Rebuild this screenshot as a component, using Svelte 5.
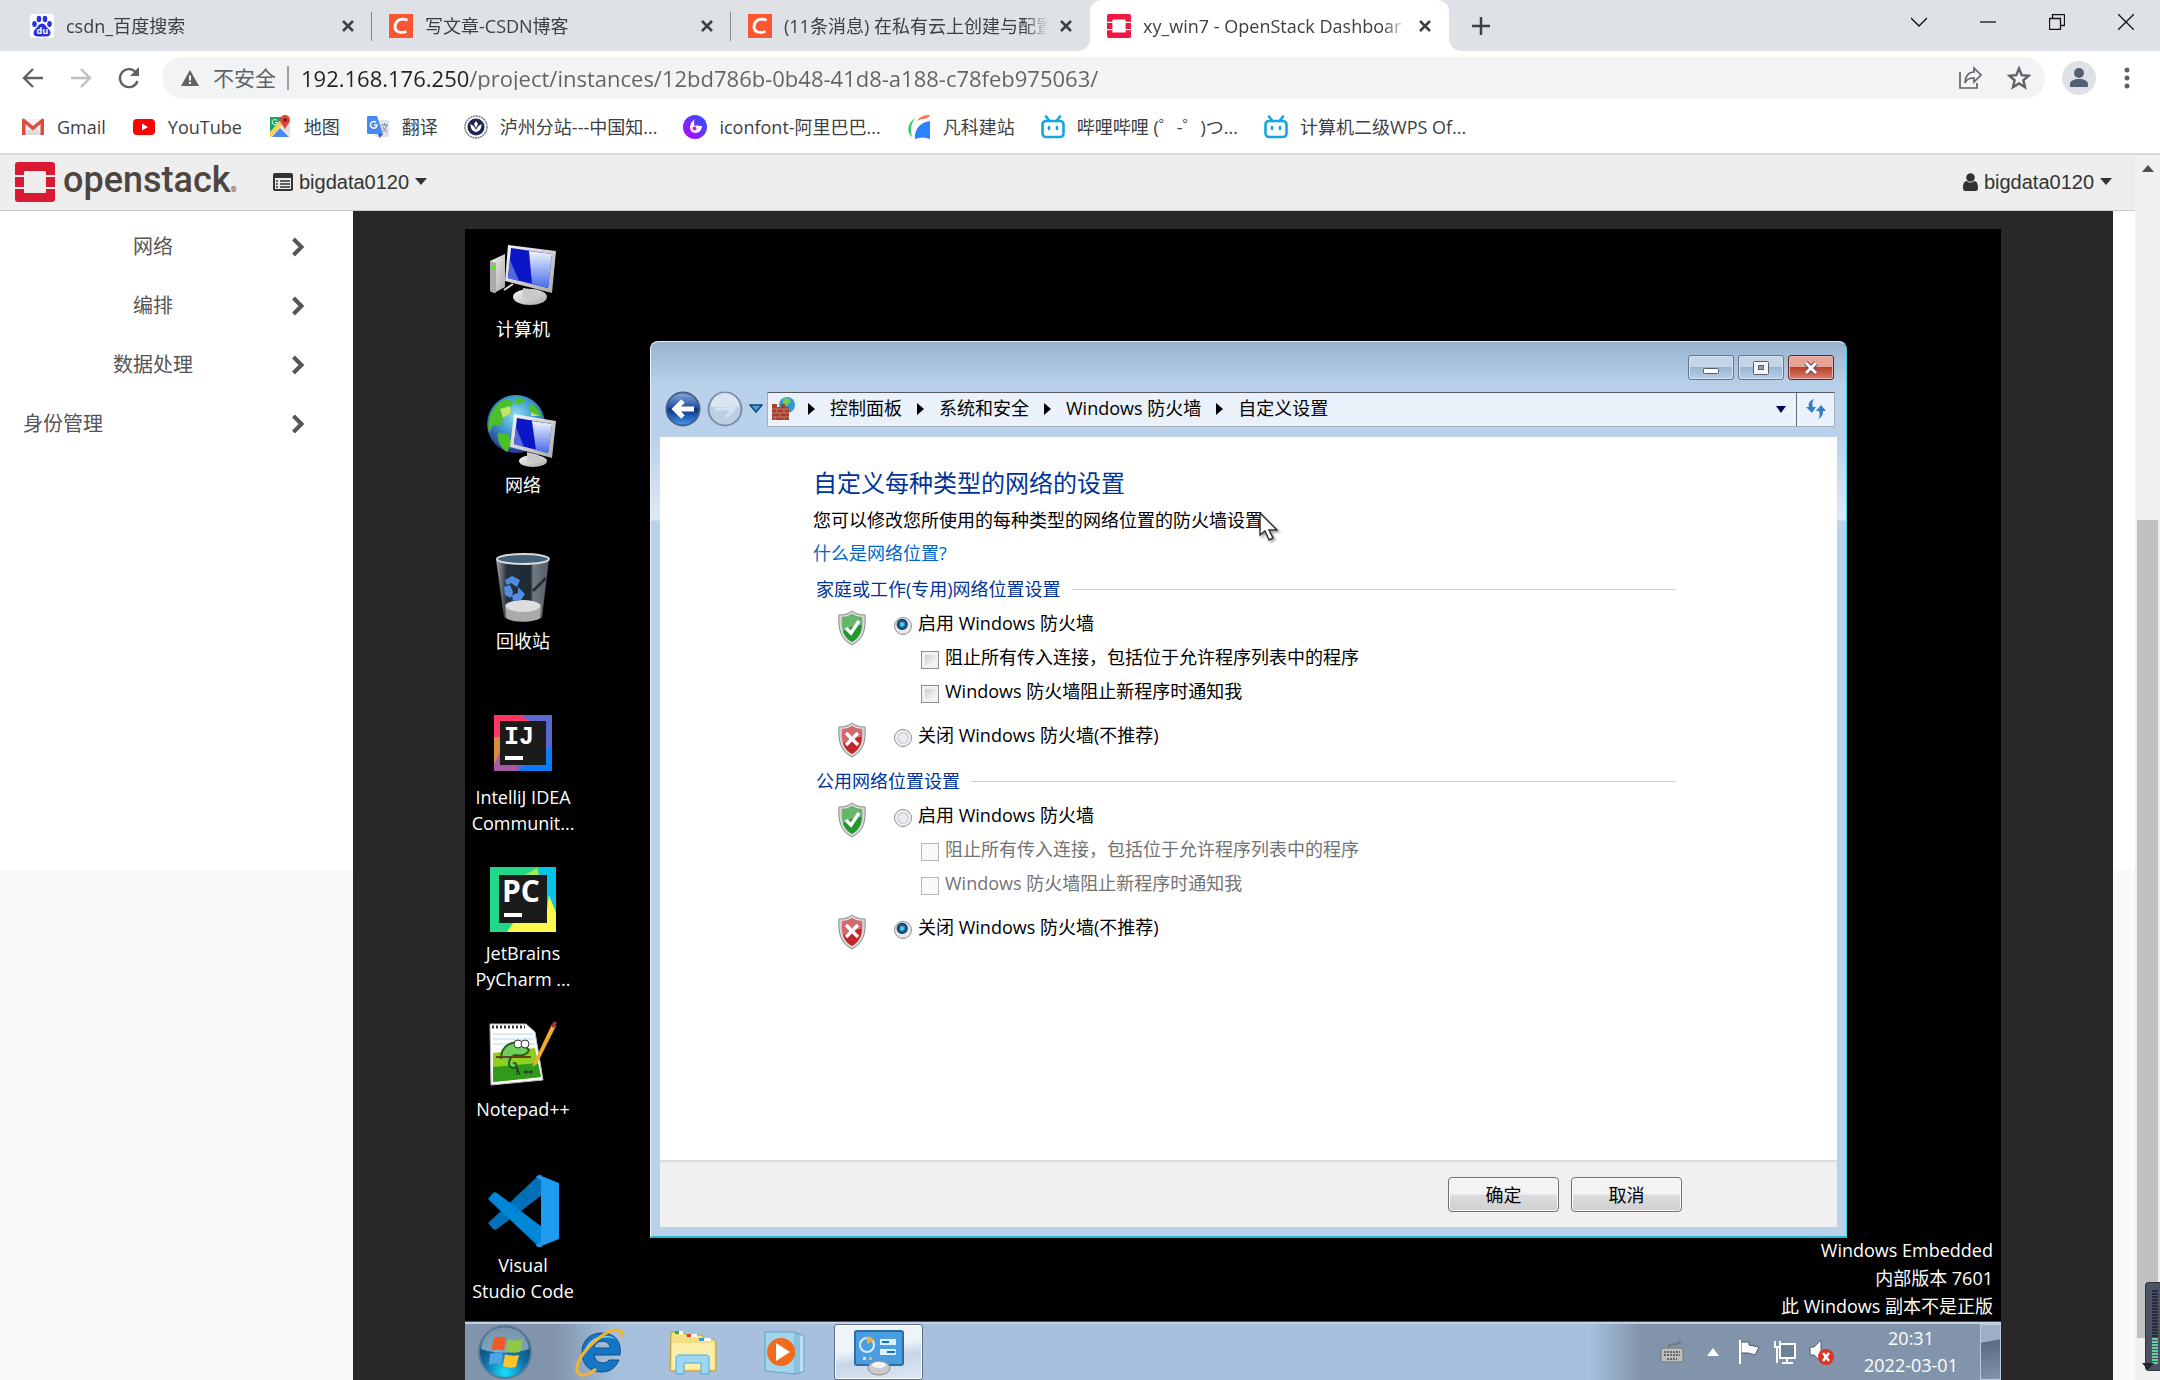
<script>
	const tabs = [
		{ icon: 'baidu', title: 'csdn_百度搜索' },
		{ icon: 'csdn', title: '写文章-CSDN博客' },
		{ icon: 'csdn', title: '(11条消息) 在私有云上创建与配置' },
		{ icon: 'openstack', title: 'xy_win7 - OpenStack Dashboar', active: true }
	];
	const bookmarks = [
		{ icon: 'gmail', title: 'Gmail' },
		{ icon: 'youtube', title: 'YouTube' },
		{ icon: 'maps', title: '地图' },
		{ icon: 'translate', title: '翻译' },
		{ icon: 'cnki', title: '泸州分站---中国知...' },
		{ icon: 'iconfont', title: 'iconfont-阿里巴巴...' },
		{ icon: 'fkw', title: '凡科建站' },
		{ icon: 'bilibili', title: '哔哩哔哩 (゜-゜)つ...' },
		{ icon: 'bilibili', title: '计算机二级WPS Of...' }
	];
	const panels = [
		{ title: '网络', nested: true },
		{ title: '编排', nested: true },
		{ title: '数据处理', nested: true },
		{ title: '身份管理' }
	];
	const shortcuts = [
		{ icon: 'computer', title: '计算机' },
		{ icon: 'network', title: '网络' },
		{ icon: 'bin', title: '回收站' },
		{ icon: 'idea', title: 'IntelliJ IDEA\nCommunit...' },
		{ icon: 'pycharm', title: 'JetBrains\nPyCharm ...' },
		{ icon: 'notepad', title: 'Notepad++' },
		{ icon: 'vscode', title: 'Visual\nStudio Code' }
	];
	const crumbs = ['控制面板', '系统和安全', 'Windows 防火墙', '自定义设置'];
	const taskbar = ['ie', 'explorer', 'player', 'control'];

	let url = $state('192.168.176.250/project/instances/12bd786b-0b48-41d8-a188-c78feb975063/');
	let locations = $state([
		{ id: 'home', title: '家庭或工作(专用)网络位置设置', firewall: 'on', block: false, notify: false },
		{ id: 'public', title: '公用网络位置设置', firewall: 'off', block: false, notify: false }
	]);
	const meter = Array.from({ length: 25 }, (_, i) => i);
</script>

{#snippet icon(name)}
	{#if name === 'baidu'}
		<svg width="24" height="24" viewBox="0 0 24 24">
			<rect width="24" height="24" rx="3" fill="#fff" />
			<g fill="#2932e1">
				<ellipse cx="4.5" cy="10" rx="2.3" ry="3" />
				<ellipse cx="9" cy="5" rx="2.3" ry="3.2" />
				<ellipse cx="15" cy="5" rx="2.3" ry="3.2" />
				<ellipse cx="19.5" cy="10" rx="2.3" ry="3" />
				<path d="M12 9.500c3 0 4 3 6 5s2.500 3 2.500 4.500c0 2-1.500 3.500-4 3.500h-9c-2.500 0-4-1.500-4-3.500 0-1.500.5-2.500 2.500-4.500s3-5 6-5z" />
			</g>
			<text x="6.500" y="20" font-size="9" font-weight="700" fill="#fff">du</text>
		</svg>
	{:else if name === 'csdn'}
		<svg width="24" height="24" viewBox="0 0 24 24">
			<rect width="24" height="24" fill="#fc5531" />
			<path d="M18.500 6.200C12 3.500 6.500 6.500 6 12.300c-.4 5.500 5 7.500 11.500 5.200" fill="none" stroke="#fff" stroke-width="2.800" />
		</svg>
	{:else if name === 'openstack'}
		<svg width="24" height="24" viewBox="0 0 40 40">
			<path
				fill="#f01742"
				d="M0 3a3 3 0 0 1 3-3h34a3 3 0 0 1 3 3v10h-9v-3a1 1 0 0 0-1-1H10a1 1 0 0 0-1 1v3H0zM0 15h9v10H0zM31 15h9v10h-9zM0 27h9v3a1 1 0 0 0 1 1h20a1 1 0 0 0 1-1v-3h9v10a3 3 0 0 1-3 3H3a3 3 0 0 1-3-3z"
			/>
		</svg>
	{:else if name === 'gmail'}
		<svg width="24" height="24" viewBox="0 0 24 24">
			<path d="M2 4h20v16H2z" fill="#f1f1f1" />
			<path d="M2 20 12 11l10 9z" fill="#dcdcdc" />
			<path d="M1 20V5c0-1.500 1.500-2 2.500-1L12 11l8.500-7c1-1 2.500-.5 2.500 1v15h-3.500V9L12 15.500 4.500 9v11z" fill="#e04a3f" />
		</svg>
	{:else if name === 'youtube'}
		<svg width="24" height="24" viewBox="0 0 24 24">
			<rect x="1" y="4" width="22" height="16" rx="4" fill="#f00" />
			<path d="m10 8.500 6 3.500-6 3.500z" fill="#fff" />
		</svg>
	{:else if name === 'maps'}
		<svg width="24" height="24" viewBox="0 0 24 24">
			<path d="M2 2h20v20H2z" fill="#e8e8e8" />
			<path d="M2 2h13L2 18z" fill="#1fa463" />
			<path d="M2 17 15 3h5L3 22H2z" fill="#ffd04b" />
			<path d="m4 22 8-9 9 9z" fill="#4a89f3" />
			<path d="m14 11 8 9V8z" fill="#ddd" />
			<path d="M17 0c3 0 5 2.200 5 5 0 4-4 5-5 10-1-5-5-6-5-10 0-2.800 2-5 5-5z" fill="#e0483c" />
			<circle cx="17" cy="5" r="2" fill="#7b2019" />
			<path d="M9 5.500a2.700 2.700 0 1 0 .6 2H7" fill="none" stroke="#fff" />
		</svg>
	{:else if name === 'translate'}
		<svg width="24" height="24" viewBox="0 0 24 24">
			<rect x="9" y="5" width="14" height="17" rx="1" fill="#dfe1e5" />
			<path d="M15 10h7M18.500 8v2m-2 7c2-1.500 3.500-4 4-7m-3.500 2c.5 2 2 4 4 5" fill="none" stroke="#74869b" />
			<path d="M1 2.500C1 1.500 1.500 1 2.500 1H11l6 18H2.500C1.500 19 1 18.500 1 17.500z" fill="#4889f4" />
			<path d="m12 19 1.500 4 3.500-4z" fill="#2a5dc0" />
			<path d="M10 7.500A3.300 3.300 0 1 0 11 10H8" fill="none" stroke="#fff" stroke-width="1.500" />
		</svg>
	{:else if name === 'cnki'}
		<svg width="24" height="24" viewBox="0 0 24 24">
			<circle cx="12" cy="12" r="11" fill="#fff" stroke="#8a8c94" stroke-width="1.800" stroke-dasharray="2 .7" />
			<circle cx="12" cy="12" r="8.500" fill="#1e2750" />
			<path d="M12 17c-5-1-5.500-5-5.500-8 2 1 4.500 3 5.500 6 1-3 3.500-5 5.500-6 0 3-.5 7-5.500 8zm0-4-2-4 2-3 2 3z" fill="#fff" />
		</svg>
	{:else if name === 'iconfont'}
		<svg width="24" height="24" viewBox="0 0 24 24">
			<defs>
				<linearGradient id="iconfont" x1="0" y1="1" x2="1" y2="0">
					<stop offset="0" stop-color="#c400ff" />
					<stop offset="1" stop-color="#1a5cff" />
				</linearGradient>
			</defs>
			<circle cx="12" cy="12" r="12" fill="url(#iconfont)" />
			<path d="M12 4c-2 3 0 5-1 7 2 0 3-1 3-1 1 1 3 1 5 1-.5 9-12 9-12 1 0-3 2-6 5-8z" fill="#fff" />
			<circle cx="11.500" cy="13.500" r="2" fill="#e01ba8" />
		</svg>
	{:else if name === 'fkw'}
		<svg width="24" height="24" viewBox="0 0 24 24">
			<path d="M8 24C7 15 13 7 23 6v18c-5-2-10-2-15 0z" fill="#2a82ff" />
			<path d="M5 22C-2 16 2 7 8 3 4 9 3 15 5 22z" fill="#37c871" />
			<path d="M10 6c3-5 8-6 13-6-1 3-5 4-8 4-2 0-3 1-5 2z" fill="#ff7043" />
		</svg>
	{:else if name === 'bilibili'}
		<svg width="24" height="24" viewBox="0 0 24 24" fill="none" stroke="#13a6e0" stroke-width="2.600" stroke-linecap="round">
			<rect x="1.500" y="6" width="21" height="16" rx="3.500" />
			<path d="M5 1.500 8.500 6M19 1.500 15.500 6M8 12v2M16 12v2" />
		</svg>
	{:else if name === 'computer' || name === 'network'}
		<svg width="72" height="72" viewBox="0 0 72 72">
			<defs>
				<linearGradient id="metal" x1="0" y1="0" x2="1" y2="1">
					<stop offset="0" stop-color="#f7f7f7" />
					<stop offset="1" stop-color="#a9a9a9" />
				</linearGradient>
				<linearGradient id="glare" x1="0" y1="0" x2="0" y2="1">
					<stop offset="0" stop-color="#f1f5ff" />
					<stop offset="1" stop-color="#4569e8" />
				</linearGradient>
				<radialGradient id="globe" cx=".5" cy=".35" r=".65">
					<stop offset="0" stop-color="#8ce1f2" />
					<stop offset=".5" stop-color="#3e97cf" />
					<stop offset="1" stop-color="#263a91" />
				</radialGradient>
			</defs>
			{#if name === 'computer'}
				<path d="m3 22 15-7v33L7 54l-4-2z" fill="url(#metal)" />
				<path d="m3 22 6 2v30l-6-2z" fill="#aaa" />
				<path d="M4 27h4v3H4z" fill="#5ce312" />
				<path d="m17 51 9-6" stroke="#d7d7d7" stroke-width="2" />
				<ellipse cx="43" cy="58" rx="17" ry="8" fill="url(#metal)" />
				<path d="m36 49 14 2v8H35z" fill="#c8c8c8" />
				<path d="m21 6 48 6-4 42-47-12z" fill="url(#metal)" />
				<path d="m24 9 41 6-4 34-40-10z" fill="#0b16c6" />
				<path d="m42 12 23 3-4 34-16-4z" fill="url(#glare)" />
				<path d="m21 39 2-18 9 21z" fill="#5269db" />
			{:else}
				<circle cx="29" cy="29" r="29" fill="url(#globe)" />
				<path d="M2 38C-1 22 7 8 20 4l7 4-6 6 4 4-8 4-4 9-7-1zM31 2l8 4-8 4-4-4zM44 8c6 4 9 9 11 14l-7-2-6-5zM11 38l10 1 4 9-5 9C14 53 10 47 11 38z" fill="#4cbf2a" />
				<path d="m13 14 10-3 1 7-8 5zM44 17l8 4h-8z" fill="#c5e26a" />
				<ellipse cx="46" cy="66" rx="14" ry="6" fill="url(#metal)" />
				<path d="m40 57 12 3v6H40z" fill="#c8c8c8" />
				<path d="m27 19 42 7-4 37-42-11z" fill="url(#metal)" />
				<path d="m30 23 35 6-4 29-34-9z" fill="#0b16c6" />
				<path d="m45 26 20 3-4 29-12-3z" fill="url(#glare)" />
				<path d="m27 49 2-17 8 20z" fill="#5269db" />
			{/if}
		</svg>
	{:else if name === 'bin'}
		<svg width="72" height="72" viewBox="0 0 72 72">
			<defs>
				<linearGradient id="glass" x1="0" y1="0" x2="1" y2="0">
					<stop offset="0" stop-color="#a4abb0" />
					<stop offset=".2" stop-color="#28323c" />
					<stop offset=".65" stop-color="#1d2935" />
					<stop offset=".7" stop-color="#707a82" />
					<stop offset="1" stop-color="#555c62" />
				</linearGradient>
			</defs>
			<path d="m9 8 8 58c3 5 35 5 38 0l7-58z" fill="url(#glass)" />
			<ellipse cx="36" cy="8" rx="26" ry="5" fill="#456078" stroke="#d7d9db" stroke-width="2" />
			<path d="M18 54c4-6 33-6 36 0l-1 13c-6 5-28 5-34 0z" fill="#aaa" />
			<ellipse cx="36" cy="55" rx="17" ry="6" fill="#dedede" />
			<path d="m46 40 13-13" stroke="#25303b" stroke-width="3" />
			<path d="m18 29 7-4 8 4-3 7-6-4-4 2zM17 36l6-2 3 7-2 6-6-3zM31 36l7 7-4 6-8 1-1-6 6-2z" fill="#4e8de2" />
		</svg>
	{:else if name === 'idea'}
		<svg width="72" height="72" viewBox="0 0 72 72">
			<path d="M7 8h58v56H7z" fill="#5b68cf" />
			<path d="M7 8h26l13 8-20 20H7z" fill="#fc3766" />
			<path d="M7 30h9v22l-9 6z" fill="#d58b42" />
			<path d="m7 58 9-20 18 26H7z" fill="#a55aa5" />
			<path d="M65 38v26H30l16-10z" fill="#087cfa" />
			<path d="M13 14h46v44H13z" fill="#1b1b1b" />
			<text x="17" y="37" font-size="25" font-family="Liberation Mono" font-weight="700" fill="#fff">IJ</text>
			<path d="M18 49h18v4H18z" fill="#fff" />
		</svg>
	{:else if name === 'pycharm'}
		<svg width="72" height="72" viewBox="0 0 72 72">
			<path d="M3 4h66v65H3z" fill="#21d789" />
			<path d="M53 4h16v40L51 24z" fill="#07c3e8" />
			<path d="m38 12 12-7 9 30-16 6z" fill="#a8e85b" />
			<path d="m20 69 6-9 34-13 2-15 7 18v19z" fill="#fcf84a" />
			<path d="M12 12h48v48H12z" fill="#1b1b1b" />
			<text x="15" y="39" font-size="30" font-weight="700" fill="#fff">PC</text>
			<path d="M17 50h18v4H17z" fill="#fff" />
		</svg>
	{:else if name === 'notepad'}
		<svg width="72" height="72" viewBox="0 0 72 72">
			<path d="M3 5h36l9 8 8 48-52 5z" fill="#fff" stroke="#bbb" />
			<path d="m6 34 42-5 6 29-48 5z" fill="#8fd01c" />
			<path d="m6 48 45-4 3 14-48 5z" fill="#2e9b1d" />
			<path d="M6 15h40M6 20h41M6 25h42" stroke="#b3d6ef" />
			<path d="M5 8h33" stroke="#333" stroke-width="3" stroke-dasharray="2 2" />
			<path d="M14 40c0-15 13-19 22-15l6 6c-2 6-8 6-14 5-6 2-9 12-2 13 5 0 4-6 0-5" fill="#6dd05a" stroke="#275d1c" stroke-width="2" />
			<circle cx="31" cy="25" r="4" fill="#fff" stroke="#333" />
			<circle cx="38" cy="25" r="4" fill="#fff" stroke="#333" />
			<path d="M9 38h35" stroke="#694020" stroke-width="2" />
			<path d="M30 56V48l3 8M36 53h10M39 51v4M44 51v4" fill="none" stroke="#222" />
			<path d="m45 48 3-7L65 5l4 2-19 38z" fill="#f0ac29" />
			<path d="m64 7 3-5 3 2-3 5z" fill="#a12e3f" />
		</svg>
	{:else if name === 'vscode'}
		<svg width="72" height="72" viewBox="0 0 72 72">
			<path d="m1 48 5 6c1 1 3 1 4 0l45-34V0h-3z" fill="#0070b8" />
			<path d="m1 24 5-6c1-1 3-1 4 0l45 34v20h-3z" fill="#0086d6" />
			<path d="M52 0 72 8v56l-20 8c-2 0-3-1-3-2l5-3V5l-5-3c1-1 2-2 3-2z" fill="#1f9cf0" />
		</svg>
	{:else if name === 'ie'}
		<svg width="50" height="50" viewBox="0 0 50 50">
			<path d="M27 6c13 0 20 9 18 22H19c1 9 12 10 15 5h10C40 42 34 45 26 45 13 45 7 36 7 25S15 6 27 6zm-8 15h16c0-9-15-9-16 0z" fill="#1576c8" stroke="#124a83" />
			<path d="M10 23C14 10 31 5 41 12 28 8 18 12 13 23z" fill="#87caed" />
			<path d="M47 10C49 0 36 1 24 11 8 23-3 41 4 47c4 3 12-1 17-5" fill="none" stroke="#f5b52a" stroke-width="3" />
		</svg>
	{:else if name === 'explorer'}
		<svg width="50" height="50" viewBox="0 0 50 50">
			<path d="M3 5h12l3 3h16l3 4h9l2 3v29H2z" fill="#f5df83" stroke="#bd9b35" />
			<path d="M7 4h8v3H7zM19 7h10v3H19zM31 11h12v3H31z" fill="#fff" />
			<path d="M7 4h4v3H7z" fill="#21b73c" />
			<path d="M19 7h4v3h-4z" fill="#d9472b" />
			<path d="M31 11h5v3h-5z" fill="#2d9cec" />
			<path d="M4 16h42v26H4z" fill="#fbedaa" />
			<path d="M8 47V31c0-2 1-3 3-3h27c2 0 3 1 3 3v16h-8V36H16v11z" fill="#9cd8f2" stroke="#4eabd1" />
		</svg>
	{:else if name === 'player'}
		<svg width="50" height="50" viewBox="0 0 50 50">
			<path d="m36 6 7 3v35l-7 3zM32 5l6 2v39l-6 1z" fill="#b9dff0" stroke="#61a5c6" />
			<path d="M4 5h30v42L4 44z" fill="#a2d4ec" stroke="#61a5c6" />
			<circle cx="20" cy="25" r="14" fill="#f16b1e" />
			<path d="m15 16 14 9-14 9z" fill="#fff" />
		</svg>
	{:else if name === 'control'}
		<svg width="50" height="50" viewBox="0 0 50 50">
			<rect x="1" y="4" width="48" height="34" rx="2" fill="#4b9ddf" stroke="#286ea8" stroke-width="2" />
			<circle cx="13" cy="18" r="7" fill="none" stroke="#d3edfb" stroke-width="2" />
			<path d="M13 17V9l8 4z" fill="#f5b23a" />
			<path d="M26 12h16v6H26zM26 22h16v6H26z" fill="#d9f1fd" />
			<path d="M28 14h7v2h-7zM33 24h8v2h-8z" fill="#1b6cb9" />
			<path d="M9 30h3v3H9z" fill="#c7e9ff" />
			<path d="M15 30h3v3h-3z" fill="#f5b23a" />
			<ellipse cx="25" cy="41" rx="11" ry="7" fill="#c9cacb" stroke="#8a8d90" />
			<ellipse cx="25" cy="38" rx="7" ry="3" fill="#f5f5f5" />
		</svg>
	{/if}
{/snippet}

{#snippet shield(on)}
	<svg class="shield" width="30" height="36" viewBox="0 0 30 36">
		<path d="M15 1c4 3 8 4 13 4 1 13-1 24-13 30C3 29 1 18 2 5c5 0 9-1 13-4z" fill="#d6d6d6" stroke="#8b8b8b" />
		<path d="M15 4c3 2 6 3 10 3 1 12-1 20-10 25C6 27 4 19 5 7c4 0 7-1 10-3z" fill={on ? '#23962b' : '#c4262c'} />
		<path d="M15 4c3 2 6 3 10 3v8c-8 0-14 3-20 7-.5-5-.5-10 0-15 4 0 7-1 10-3z" fill="#fff" opacity=".3" />
		{#if on}
			<path d="m9 18 5 5 8-12" fill="none" stroke="#fff" stroke-width="3.500" />
		{:else}
			<path d="m9 11 12 12m0-12L9 23" stroke="#fff" stroke-width="3.500" />
		{/if}
	</svg>
{/snippet}

<div class="browser">
	<header class="tab-strip">
		<nav class="tabs">
			{#each tabs as tab}
				<div class="tab" class:active={tab.active}>
					{@render icon(tab.icon)}
					<span class="tab-title">{tab.title}</span>
					<button class="tab-close" aria-label="关闭">
						<svg width="16" height="16" viewBox="0 0 16 16"><path d="m3 3 10 10m0-10L3 13" /></svg>
					</button>
				</div>
			{/each}
		</nav>
		<button class="new-tab" aria-label="新标签页">
			<svg width="20" height="20" viewBox="0 0 20 20"><path d="M10 1v18M1 10h18" /></svg>
		</button>
		<div class="window-controls">
			<button aria-label="搜索标签页"><svg width="16" height="16" viewBox="0 0 16 16"><path d="m0 4 8 8 8-8" /></svg></button>
			<button aria-label="最小化"><svg width="16" height="16" viewBox="0 0 16 16"><path d="M0 8h16" /></svg></button>
			<button aria-label="还原"><svg width="16" height="16" viewBox="0 0 16 16"><path d="M.5 4.500h11v11H.5zM3.500 4V.5h12v11H12" /></svg></button>
			<button aria-label="关闭窗口"><svg width="16" height="16" viewBox="0 0 16 16"><path d="m0 0 16 16M16 0 0 16" /></svg></button>
		</div>
	</header>

	<div class="toolbar">
		<button aria-label="后退"><svg width="24" height="24" viewBox="0 0 24 24"><path d="M22 12H3m9-9-9 9 9 9" /></svg></button>
		<button class="dim" aria-label="前进"><svg width="24" height="24" viewBox="0 0 24 24"><path d="M2 12h19m-9-9 9 9-9 9" /></svg></button>
		<button aria-label="重新加载">
			<svg width="24" height="24" viewBox="0 0 24 24"><path d="M19 6.500A9 9 0 1 0 20.500 15" /><path d="M22 1v9h-9z" fill="#5f6368" stroke="none" /></svg>
		</button>
		<div class="omnibox">
			<svg width="18" height="16" viewBox="0 0 18 16"><path d="M9 0 18 16H0z" fill="#5f6368" /><path d="M9 5.500v5M9 12v2" stroke="#fff" stroke-width="2" /></svg>
			<span class="insecure">不安全</span>
			<input class="url" aria-label="地址" bind:value={url} />
			<button aria-label="分享"><svg width="24" height="24" viewBox="0 0 24 24"><path d="M1 6v16h17v-5M15 2l7 7-7 7v-4c-5 0-8 2-9 5 0-6 3-11 9-11z" stroke-width="1.700" /></svg></button>
			<button aria-label="收藏"><svg width="24" height="24" viewBox="0 0 24 24"><path d="m12 2.500 2.700 6.600 7 .6-5.300 4.600 1.600 7-6-3.800-6 3.800 1.600-7-5.300-4.600 7-.6z" /></svg></button>
		</div>
		<button class="profile" aria-label="用户"><svg width="34" height="34" viewBox="0 0 34 34"><circle cx="17" cy="17" r="17" fill="#dee1e6" /><circle cx="17" cy="12" r="5" fill="#525e73" /><path d="M8 26v-3c0-3 4-5 9-5s9 2 9 5v3z" fill="#525e73" /></svg></button>
		<button class="more" aria-label="菜单"><svg width="6" height="22" viewBox="0 0 6 22" fill="#5f6368"><circle cx="3" cy="3" r="2.500" /><circle cx="3" cy="11" r="2.500" /><circle cx="3" cy="19" r="2.500" /></svg></button>
	</div>

	<nav class="bookmarks">
		{#each bookmarks as bookmark}
			<a href="#bookmark">{@render icon(bookmark.icon)}{bookmark.title}</a>
		{/each}
	</nav>

	<div class="viewport">
		<div class="page">
			<header class="navbar">
				<a class="brand" href="#home">
					<svg width="40" height="40" viewBox="0 0 40 40">
						<path
							fill="#da1a32"
							d="M0 3a3 3 0 0 1 3-3h34a3 3 0 0 1 3 3v10h-9v-3a1 1 0 0 0-1-1H10a1 1 0 0 0-1 1v3H0zM0 15h9v10H0zM31 15h9v10h-9zM0 27h9v3a1 1 0 0 0 1 1h20a1 1 0 0 0 1-1v-3h9v10a3 3 0 0 1-3 3H3a3 3 0 0 1-3-3z"
						/>
					</svg>
					<span class="wordmark">openstack<small>®</small></span>
				</a>
				<button class="menu">
					<svg width="20" height="18" viewBox="0 0 20 18"><rect x="1" y="1" width="18" height="16" rx="1" fill="none" stroke="#333" stroke-width="2" /><path d="M1 1h18v4H1z" fill="#333" /><path d="M3 8h2M7 8h10M3 11h2M7 11h10M3 14h2M7 14h10" stroke="#333" stroke-width="1.500" /></svg>
					bigdata0120<i class="caret"></i>
				</button>
				<button class="menu user">
					<svg width="15" height="18" viewBox="0 0 15 18" fill="#333"><circle cx="7.500" cy="4.500" r="4.300" /><path d="M0 15c0-4 1-7 4-7 2 2 5 2 7 0 3 0 4 3 4 7 0 2-1 3-2 3H2c-1 0-2-1-2-3z" /></svg>
					bigdata0120<i class="caret"></i>
				</button>
			</header>

			<div class="content">
				<nav class="sidebar">
					{#each panels as panel}
						<a href="#panel" class:nested={panel.nested}>
							<span>{panel.title}</span>
							<svg width="14" height="20" viewBox="0 0 14 20"><path d="m2.500 2 8 8-8 8" fill="none" stroke="#555" stroke-width="4" /></svg>
						</a>
					{/each}
				</nav>

				<main class="console">
					<div class="desktop">
						<div class="shortcuts">
							{#each shortcuts as shortcut}
								<button class="shortcut">{@render icon(shortcut.icon)}<span>{shortcut.title}</span></button>
							{/each}
						</div>

						<p class="watermark">Windows Embedded<br />内部版本 7601<br />此 Windows 副本不是正版</p>

						<section class="window">
							<div class="titlebar">
								<button aria-label="最小化"><svg width="18" height="14" viewBox="0 0 18 14"><rect x="1.500" y="7.500" width="15" height="5" rx="1" fill="#fff" stroke="#55606e" /></svg></button>
								<button aria-label="最大化"><svg width="18" height="14" viewBox="0 0 18 14"><rect x="1.500" y=".5" width="15" height="13" rx="1" fill="#f4f4f4" stroke="#55606e" /><rect x="6.500" y="4.500" width="5" height="4" fill="#8ba4c2" stroke="#55606e" /></svg></button>
								<button class="close" aria-label="关闭"><svg width="18" height="14" viewBox="0 0 18 14"><path d="m4 2 10 10M14 2 4 12" stroke="#5c4a52" stroke-width="5" /><path d="m4 2 10 10M14 2 4 12" stroke="#fff" stroke-width="3" /></svg></button>
							</div>
							<div class="address-row">
								<button class="round" aria-label="返回">
									<svg width="36" height="36" viewBox="0 0 36 36">
										<defs>
											<linearGradient id="back" x1="0" y1="0" x2="0" y2="1"><stop offset="0" stop-color="#89acdb" /><stop offset=".45" stop-color="#2450a6" /><stop offset=".5" stop-color="#0b2f85" /><stop offset="1" stop-color="#3f9cf0" /></linearGradient>
										</defs>
										<circle cx="18" cy="18" r="16.500" fill="url(#back)" stroke="#4a5f84" stroke-width="2" />
										<path d="M29 18H11m7-8-8 8 8 8" fill="none" stroke="#fff" stroke-width="5" />
									</svg>
								</button>
								<button class="round" aria-label="前进" disabled>
									<svg width="36" height="36" viewBox="0 0 36 36"><circle cx="18" cy="18" r="16.500" fill="#bccfe3" stroke="#7b8ea8" stroke-width="2" /><path d="M4 16a14 14 0 0 1 28 0z" fill="#dbe6f1" /><path d="M8 18h18m-7-8 8 8-8 8" fill="none" stroke="#d4e1ee" stroke-width="3" /></svg>
								</button>
								<svg class="history" width="14" height="10" viewBox="0 0 14 10"><path d="M1 1h12L7 8z" fill="#3fa5dc" stroke="#1d4277" stroke-width="1.500" /></svg>
								<div class="path">
									<svg width="24" height="24" viewBox="0 0 24 24">
										<circle cx="15" cy="8" r="8" fill="#3399d5" /><path d="M11 2c4-2 7 0 8 2l-4 5-4-3z" fill="#73d14b" />
										<path d="M0 7h5v3h4V7h4v3h4v13H0z" fill="#a1402e" /><path d="M0 12h17M0 16h17M0 20h17M5 12v4M12 12v4M8 16v4M3 20v3M12 20v3" stroke="#c47d6a" />
									</svg>
									{#each crumbs as crumb}
										<svg width="7" height="12" viewBox="0 0 7 12"><path d="m0 0 7 6-7 6z" /></svg>
										<a href="#crumb">{crumb}</a>
									{/each}
									<svg class="drop" width="10" height="7" viewBox="0 0 10 7"><path d="M0 0h10L5 7z" fill="#00005a" /></svg>
									<button class="refresh" aria-label="刷新"><svg width="22" height="22" viewBox="0 0 22 22" fill="#377cc8"><path d="M9 1C4 3 3 6 4 9H1l6 6 4-6H8c-1-3-1-5 1-8zM13 21c5-2 5-6 5-8h3l-5-6-5 6h3c1 4 1 6-1 8z" /></svg></button>
								</div>
							</div>
							<div class="settings">
								<h1>自定义每种类型的网络的设置</h1>
								<p>您可以修改您所使用的每种类型的网络位置的防火墙设置</p>
								<a href="#help">什么是网络位置?</a>
								{#each locations as location}
									<section class="location">
										<h2>{location.title}</h2>
										<label class="option">
											{@render shield(true)}
											<input type="radio" name={location.id} value="on" bind:group={location.firewall} />启用 Windows 防火墙
										</label>
										<label class="sub">
											<input type="checkbox" bind:checked={location.block} disabled={location.firewall === 'off'} /><span>阻止所有传入连接，包括位于允许程序列表中的程序</span>
										</label>
										<label class="sub">
											<input type="checkbox" bind:checked={location.notify} disabled={location.firewall === 'off'} /><span>Windows 防火墙阻止新程序时通知我</span>
										</label>
										<label class="option off">
											{@render shield(false)}
											<input type="radio" name={location.id} value="off" bind:group={location.firewall} />关闭 Windows 防火墙(不推荐)
										</label>
									</section>
								{/each}
							</div>
							<footer class="actions">
								<button>确定</button>
								<button>取消</button>
							</footer>
							<svg class="pointer" width="22" height="30" viewBox="0 0 22 30"><path d="M1 1v22l5-4 4 9 4-2-4-8h8z" fill="#fff" stroke="#333" stroke-width="1.500" /></svg>
						</section>

						<div class="taskbar">
							<button class="start" aria-label="开始">
								<svg width="56" height="56" viewBox="0 0 56 56">
									<defs>
										<radialGradient id="orb" cx=".5" cy=".9" r=".9"><stop offset="0" stop-color="#16e0fb" /><stop offset=".45" stop-color="#126fa5" /><stop offset="1" stop-color="#0d3558" /></radialGradient>
									</defs>
									<circle cx="28" cy="28" r="26" fill="url(#orb)" stroke="#547d9c" stroke-width="2" />
									<path d="M4 25C6-4 50-4 52 25c-14 5-34 5-48 0z" fill="#e3edf4" opacity=".5" />
									<path d="M17 14c4-2 8-2 12 0l-2 13c-4-2-9-2-13 0z" fill="#ee5a28" />
									<path d="M31 15c4 2 9 2 15 0l-3 13c-5 1-9 1-14-1z" fill="#91c83e" />
									<path d="M13 30c4-2 9-2 13 0l-2 11c-4-2-8-2-12 0z" fill="#4ea3e4" />
									<path d="M28 30c5 2 9 2 14 1l-3 12c-4 1-9 1-13-1z" fill="#fec42d" />
								</svg>
							</button>
							{#each taskbar as app}
								<button class="app" class:running={app === 'control'} aria-label={app}>{@render icon(app)}</button>
							{/each}
							<div class="tray">
								<svg width="24" height="26" viewBox="0 0 24 26"><path d="M8 8c4-7 6 2 13-6" fill="none" stroke="#777" stroke-width="2" /><rect x="1" y="9" width="22" height="14" rx="2" fill="#bdbdbd" stroke="#777" /><path d="M4 13h16M4 16h16M7 20h10" stroke="#666" stroke-width="2" stroke-dasharray="2 1" /></svg>
								<svg width="12" height="8" viewBox="0 0 12 8"><path d="m6 0 6 8H0z" fill="#fff" /></svg>
								<svg width="24" height="26" viewBox="0 0 24 26"><path d="M3 2v23M4 3h8v3l10 2-4 8-7-2H4z" fill="#fff" stroke="#4b5968" /><path d="M3 1v24" stroke="#fff" stroke-width="2" /></svg>
								<svg width="24" height="26" viewBox="0 0 24 26"><rect x="7" y="5" width="15" height="14" fill="#6f8196" stroke="#fff" stroke-width="2" /><path d="M2 2v6h5V2M4 8v16M14 19v4M9 24h11" fill="none" stroke="#fff" stroke-width="2" /></svg>
								<svg width="26" height="26" viewBox="0 0 26 26"><path d="M1 8h4l7-7v22l-7-7H1z" fill="#fff" stroke="#555f6c" /><circle cx="17" cy="18" r="8" fill="#df3327" /><path d="m14 14 6 8m0-8-6 8" stroke="#fff" stroke-width="2.500" /></svg>
							</div>
							<time class="clock">20:31<br />2022-03-01</time>
							<button class="peek" aria-label="显示桌面"></button>
						</div>
					</div>
				</main>
			</div>
		</div>

		<div class="scrollbar">
			<svg width="12" height="7" viewBox="0 0 12 7"><path d="m6 0 6 7H0z" fill="#505050" /></svg>
			<div class="thumb"></div>
		</div>
	</div>

	<div class="level-meter">
		{#each meter as bar}
			<i class:lit={bar > 15}></i>
		{/each}
		<svg width="12" height="7" viewBox="0 0 12 7"><path d="m6 7 6-7H0z" fill="#23252d" /></svg>
	</div>
</div>

<style>
	:global(body) {
		margin: 0;
		background: #fff;
	}
	.browser {
		position: relative;
		display: flex;
		flex-direction: column;
		min-height: 100vh;
		overflow: hidden;
		font: 18px/24px 'Open Sans', 'Noto Sans CJK SC', sans-serif;
		color: #3c4043;
	}
	.browser * {
		box-sizing: border-box;
	}
	button {
		display: flex;
		align-items: center;
		justify-content: center;
		padding: 0;
		border: 0;
		background: none;
		font: inherit;
		color: inherit;
	}
	a {
		color: inherit;
		text-decoration: none;
	}
	svg {
		flex: none;
	}

	/* browser chrome */
	.tab-strip {
		display: flex;
		height: 51px;
		padding-left: 13px;
		background: #dee1e6;
	}
	.tabs {
		display: flex;
	}
	.tab {
		position: relative;
		display: flex;
		align-items: center;
		width: 359px;
		padding: 0 16px 0 17px;
		border-radius: 12px 12px 0 0;
	}
	.tab:not(.active)::after {
		content: '';
		position: absolute;
		right: 0;
		top: 12px;
		width: 1px;
		height: 29px;
		background: #85888d;
	}
	.tab:nth-child(3)::after {
		display: none;
	}
	.tab.active {
		background: #fff;
	}
	.tab.active::before,
	.tab.active::after {
		content: '';
		position: absolute;
		bottom: 0;
		left: -12px;
		width: 12px;
		height: 12px;
		background: radial-gradient(circle at 0 0, transparent 12px, #fff 12px);
	}
	.tab.active::after {
		left: 100%;
		background: radial-gradient(circle at 100% 0, transparent 12px, #fff 12px);
	}
	.tab-title {
		flex: 1;
		margin: 0 10px 0 12px;
		overflow: hidden;
		white-space: nowrap;
		mask-image: linear-gradient(90deg, #000 calc(100% - 24px), transparent);
	}
	.tab-close svg,
	.new-tab svg {
		stroke: #3c4043;
		stroke-width: 2.5;
	}
	.new-tab {
		width: 64px;
	}
	.window-controls {
		display: flex;
		height: 43px;
		margin-left: auto;
	}
	.window-controls button {
		width: 69px;
	}
	.window-controls svg {
		fill: none;
		stroke: #111;
		stroke-width: 1.3;
	}
	.toolbar {
		display: flex;
		align-items: center;
		height: 54px;
		padding: 0 21px;
		fill: none;
		stroke: #5f6368;
		stroke-width: 2.4;
	}
	.toolbar > button {
		width: 24px;
		margin-right: 24px;
	}
	.toolbar .dim {
		opacity: 0.4;
	}
	.toolbar .omnibox {
		display: flex;
		align-items: center;
		flex: 1;
		height: 42px;
		margin-left: -3px;
		padding: 0 14px 0 19px;
		border-radius: 21px;
		background: #f1f3f4;
		font-size: 21px;
		stroke: #5f6368;
	}
	.omnibox > svg {
		stroke: none;
	}
	.omnibox button {
		margin-left: 24px;
	}
	.insecure {
		margin-left: 14px;
		padding-right: 11px;
		border-right: 2px solid #9aa0a6;
		color: #5f6368;
	}
	.url {
		flex: 1;
		margin-left: 12px;
		padding: 0;
		border: 0;
		outline: 0;
		font: inherit;
		font-size: 22px;
		color: transparent;
		background: linear-gradient(90deg, #202124 169px, #5f6368 169px);
		background-clip: text;
	}
	.toolbar .profile {
		width: 34px;
		margin: 0 28px 0 17px;
		stroke: none;
	}
	.toolbar .more {
		width: 6px;
		margin: 0 9px 0 0;
		stroke: none;
	}
	.bookmarks {
		display: flex;
		gap: 26px;
		height: 50px;
		padding: 0 21px 4px;
		border-bottom: 2px solid #d9dadc;
		white-space: nowrap;
	}
	.bookmarks a {
		display: flex;
		align-items: center;
		gap: 12px;
	}

	/* dashboard */
	.viewport {
		display: flex;
		flex: 1;
	}
	.page {
		display: flex;
		flex: 1;
		flex-direction: column;
		background: linear-gradient(#fff 715px, #f9f9f9 715px);
	}
	.navbar {
		display: flex;
		align-items: center;
		height: 56px;
		padding: 0 23px 2px 15px;
		border-bottom: 1px solid #c9c9c9;
		background: #eee;
		font: 20px/24px 'Liberation Sans', Arial, sans-serif;
		color: #333;
	}
	.brand {
		display: flex;
		align-items: center;
		gap: 8px;
	}
	.wordmark {
		width: 173px;
		padding-top: 6px;
		font: 500 36px/40px Roboto, sans-serif;
		color: #4d4540;
	}
	.wordmark small {
		font-size: 8px;
	}
	.menu {
		gap: 6px;
		margin-left: 37px;
	}
	.menu.user {
		margin-left: auto;
	}
	.caret {
		border: 6px solid transparent;
		border-top: 7px solid #333;
		border-bottom: 0;
	}
	.content {
		display: flex;
		flex: 1;
		padding-right: 22px;
	}
	.sidebar {
		display: flex;
		flex-direction: column;
		width: 353px;
		padding-top: 6px;
		font: 20px/24px 'Liberation Sans', 'Noto Sans CJK SC', sans-serif;
		color: #555;
	}
	.sidebar a {
		display: flex;
		align-items: center;
		height: 59px;
		padding: 0 48px 0 23px;
	}
	.sidebar span {
		flex: 1;
	}
	.sidebar .nested span {
		padding-right: 8px;
		text-align: center;
	}
	.console {
		display: flex;
		flex: 1;
		padding: 18px 112px 0;
		background: #282828;
	}
	.desktop {
		position: relative;
		display: flex;
		flex: 1;
		flex-direction: column;
		background: #000;
		color: #fff;
	}
	.shortcuts {
		display: flex;
		flex: 1;
		flex-direction: column;
		align-items: flex-start;
		gap: 27px;
		padding: 10px 0 18px;
	}
	.shortcut {
		flex-direction: column;
		justify-content: flex-start;
		gap: 5px;
		width: 116px;
		height: 129px;
		line-height: 26px;
		white-space: pre-line;
	}
	.watermark {
		position: absolute;
		right: 8px;
		bottom: 60px;
		margin: 0;
		line-height: 28px;
		text-align: right;
	}

	/* control panel window */
	.window {
		position: absolute;
		top: 112px;
		right: 154px;
		bottom: 142px;
		left: 185px;
		display: flex;
		flex-direction: column;
		padding: 0 9px 9px;
		border: 1px solid #e8f1f8;
		border-right-color: #3fd0ea;
		border-bottom: 2px solid #2bb9cf;
		border-radius: 8px 8px 0 0;
		background: linear-gradient(#99b3cf, #b9d1ea 44px, #b9d1ea 96px, #dde9f6 178px, #bad1eb 179px);
		color: #000;
	}
	.titlebar {
		display: flex;
		justify-content: flex-end;
		gap: 4px;
		height: 49px;
		padding: 13px 3px 0;
	}
	.titlebar button {
		width: 46px;
		height: 25px;
		border: 1px solid #60758f;
		border-radius: 3px;
		background: linear-gradient(#c4d5e8 48%, #9cb5d1 50%, #b7cfe8);
		box-shadow: inset 0 0 0 1px #d5e2f0;
	}
	.titlebar .close {
		border-color: #5b2634;
		background: linear-gradient(#e6a497 48%, #bb3f27 50%, #d8806f);
		box-shadow: inset 0 0 0 1px #eab4aa;
	}
	.address-row {
		display: flex;
		align-items: center;
		height: 46px;
		padding: 0 2px 10px 5px;
	}
	.round {
		margin-right: 6px;
	}
	.history {
		margin-right: 4px;
	}
	.path {
		display: flex;
		flex: 1;
		align-items: center;
		height: 35px;
		padding-left: 4px;
		border: 1px solid #a4adb8;
		border-top-color: #545a62;
		background: #eaf1fa;
		line-height: 22px;
	}
	.path > svg:not(:first-child) {
		margin-left: 15px;
	}
	.path > svg:nth-child(2) {
		margin-left: 12px;
	}
	.path a {
		margin: 0 0 2px 15px;
	}
	.path .drop.drop {
		margin: 0 10px 0 auto;
	}
	.refresh {
		width: 38px;
		height: 33px;
		border-left: 1px solid #666d76;
	}
	.settings {
		flex: 1;
		padding: 30px 161px 0 153px;
		background: #fff;
	}
	h1,
	h2,
	p {
		margin: 0;
		font-weight: 400;
	}
	h1 {
		font-size: 24px;
		line-height: 32px;
		color: #039;
	}
	.settings p,
	.settings > a {
		display: block;
		margin-top: 9px;
		font-size: 18px;
		line-height: 24px;
	}
	.settings > a {
		color: #06c;
	}
	.location {
		display: flex;
		flex-direction: column;
		gap: 10px;
		margin: 12px 0 22px 3px;
	}
	.location + .location {
		margin-top: 0;
	}
	h2 {
		display: flex;
		align-items: center;
		gap: 11px;
		font-size: 18px;
		line-height: 24px;
		color: #039;
	}
	h2::after {
		content: '';
		flex: 1;
		height: 1px;
		background: #d2d2d2;
	}
	.option,
	.sub {
		display: flex;
		align-items: flex-start;
		gap: 6px;
		height: 24px;
		padding-left: 21px;
	}
	.sub {
		padding-left: 105px;
	}
	.off {
		margin-top: 10px;
	}
	.shield {
		margin-right: 21px;
		margin-top: -1px;
	}
	input[type='radio'],
	input[type='checkbox'] {
		appearance: none;
		flex: none;
		width: 18px;
		height: 18px;
		margin: 6px 0 0;
		border: 1px solid #8e8f8f;
		background: linear-gradient(135deg, #c9ced6, #fafafa) content-box, #f1f1f1;
		padding: 3px;
	}
	input[type='radio'] {
		border-radius: 50%;
		background: radial-gradient(circle, #e9ebee 4px, #c9cdd3 5px, #f6f6f6 7px);
	}
	input[type='radio']:checked {
		background: radial-gradient(circle at 45% 40%, #5fd0f5 1px, #1b6ca6 3px, #0d3459 5px, #e6e8ea 6px);
	}
	input[type='checkbox']:disabled {
		border-color: #b8b8b8;
		background: #f9f9f9;
	}
	input:disabled + span {
		color: #737373;
	}
	.actions {
		display: flex;
		gap: 12px;
		justify-content: flex-end;
		height: 67px;
		padding: 15px 155px 0;
		border-top: 2px solid #dcdcdc;
		background: #f0f0f0;
	}
	.actions button {
		width: 111px;
		height: 35px;
		border: 1px solid #707070;
		border-radius: 4px;
		background: linear-gradient(#f3f3f3 48%, #dddddd 52%, #cfcfcf);
		box-shadow: inset 0 0 0 1px #fafafa;
	}
	.pointer {
		position: absolute;
		top: 170px;
		left: 608px;
		filter: drop-shadow(2px 2px 1px #0005);
	}

	/* taskbar */
	.taskbar {
		display: flex;
		height: 58px;
		border-top: 2px solid #c2d3e8;
		background: linear-gradient(90deg, #8294ab 90px, #a7c0dd 150px, #a7c0dd calc(100% - 412px), #8294ab calc(100% - 360px));
		box-shadow: 0 -1px #454e5a;
	}
	.start {
		margin: 0 22px 0 12px;
	}
	.app {
		width: 89px;
		margin-right: 4px;
	}
	.app.running {
		border: 1px solid #5c6f87;
		border-radius: 3px;
		background: linear-gradient(170deg, #eff4f9 40%, #c8d6e8 60%, #dfe8f2);
		box-shadow: inset 0 0 0 1px #fff;
	}
	.tray {
		display: flex;
		align-items: center;
		gap: 12px;
		margin-left: auto;
	}
	.tray svg:nth-child(2) {
		margin: 0 6px 0 11px;
	}
	.clock {
		width: 98px;
		margin: 1px 20px 0 27px;
		line-height: 27px;
		text-align: center;
	}
	.peek {
		width: 21px;
		border: 1px solid #b9cadd;
		background: linear-gradient(170deg, #9dafc4 30%, #5a6c81 32%, #8294ab);
	}

	/* page scrollbar and the floating level meter */
	.scrollbar {
		display: flex;
		flex-direction: column;
		align-items: center;
		width: 25px;
		padding: 10px 0 42px;
		background: #f0f0f0;
	}
	.thumb {
		flex: 1;
		width: 21px;
		margin-top: 348px;
		background: #c1c1c1;
	}
	.level-meter {
		position: absolute;
		right: 0;
		bottom: 9px;
		display: flex;
		flex-direction: column;
		gap: 1px;
		width: 15px;
		height: 89px;
		padding: 7px 2px 0 6px;
		border: 1px solid #30333f;
		border-right: 0;
		border-radius: 4px 0 0 4px;
		background: #4c5163;
	}
	.level-meter i {
		height: 2px;
		background: #292c38;
	}
	.level-meter .lit {
		background: #63cfa0;
	}
	.level-meter svg {
		position: absolute;
		bottom: 0;
		left: -4px;
	}
</style>
